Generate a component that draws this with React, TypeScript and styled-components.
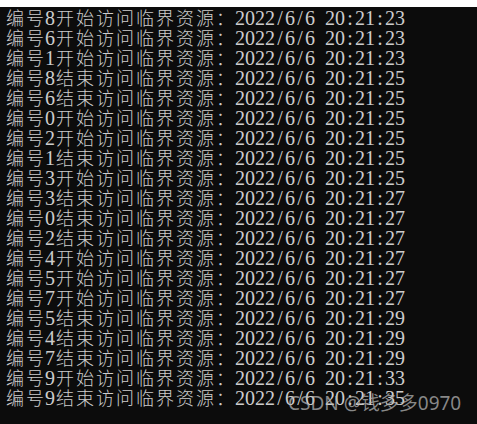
import React from "react";
import styled, { createGlobalStyle } from "styled-components";

const Global = createGlobalStyle`
  html, body { margin: 0; padding: 0; background: #ffffff; }
  body { width: 477px; height: 424px; overflow: hidden; }
`;

const Page = styled.div`
  width: 477px;
  height: 424px;
  padding-top: 7px;
  box-sizing: border-box;
  background: #ffffff;
`;

const Console = styled.div`
  position: relative;
  height: 417px;
  background: #0c0c0c;
  padding-left: 5px;
  box-sizing: border-box;
  display: flex;
  flex-direction: column;
  color: #cccccc;
`;

const Line = styled.div`
  display: flex;
  height: 20px;
  white-space: pre;
`;

const Cell = styled.span<{ $wide: boolean }>`
  display: inline-block;
  width: ${(p) => (p.$wide ? 20 : 10)}px;
  height: 20px;
  text-align: center;
  overflow: visible;
  font-family: ${(p) =>
    p.$wide ? `"Noto Sans CJK SC", sans-serif` : `"Liberation Serif", serif`};
  font-size: ${(p) => (p.$wide ? 18 : 20)}px;
  font-weight: ${(p) => (p.$wide ? 300 : 400)};
  line-height: ${(p) => (p.$wide ? 21 : 23)}px;
`;

const Watermark = styled.div`
  position: absolute;
  left: 288px;
  top: 385px;
  font-family: "Noto Sans", "Noto Sans CJK SC", sans-serif;
  font-size: 19px;
  line-height: 22px;
  color: rgba(185, 185, 185, 0.72);
  white-space: nowrap;
`;

const data: [string, string, string][] = [
  ["8", "开始", "23"],
  ["6", "开始", "23"],
  ["1", "开始", "23"],
  ["8", "结束", "25"],
  ["6", "结束", "25"],
  ["0", "开始", "25"],
  ["2", "开始", "25"],
  ["1", "结束", "25"],
  ["3", "开始", "25"],
  ["3", "结束", "27"],
  ["0", "结束", "27"],
  ["2", "结束", "27"],
  ["4", "开始", "27"],
  ["5", "开始", "27"],
  ["7", "开始", "27"],
  ["5", "结束", "29"],
  ["4", "结束", "29"],
  ["7", "结束", "29"],
  ["9", "开始", "33"],
  ["9", "结束", "35"],
];

const isWide = (c: string) => c.charCodeAt(0) > 0x2e80;

export default function App() {
  return (
    <>
      <Global />
      <Page>
        <Console>
          {data.map(([n, act, s], i) => {
            const text = `编号${n}${act}访问临界资源：2022/6/6 20:21:${s}`;
            return (
              <Line key={i}>
                {Array.from(text).map((c, j) => (
                  <Cell key={j} $wide={isWide(c)}>
                    {c}
                  </Cell>
                ))}
              </Line>
            );
          })}
          <Watermark>CSDN @钱多多0970</Watermark>
        </Console>
      </Page>
    </>
  );
}
